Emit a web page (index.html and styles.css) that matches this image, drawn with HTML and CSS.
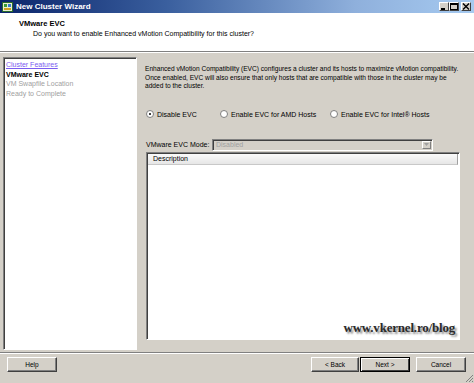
FILE: index.html
```html
<!DOCTYPE html>
<html lang="en">

<head>
    <meta charset="UTF-8">
    <meta name="viewport" content="width=device-width, initial-scale=1.0">
    <title>New Cluster Wizard</title>
    <link rel="stylesheet" href="styles.css">
</head>

<body>
    <div class="window">
        <div class="titlebar">
            <svg class="title-icon" width="11" height="10" viewBox="0 0 11 10">
                <rect x="0.5" y="0.5" width="10" height="9" fill="#e8f0d0" stroke="#2a6a2a"/>
                <rect x="2" y="2" width="3" height="3" fill="#3a9a3a"/>
                <rect x="6" y="2" width="3" height="3" fill="#3a7ad0"/>
                <rect x="2" y="6" width="7" height="2" fill="#d0a020"/>
            </svg>
            <span class="title-text">New Cluster Wizard</span>
            <div class="controls">
                <span class="ctl"><svg width="8" height="7" viewBox="0 0 8 7"><rect x="1" y="5" width="4" height="2" fill="#000"/></svg></span>
                <span class="ctl"><svg width="8" height="7" viewBox="0 0 8 7"><rect x="0.5" y="0.5" width="7" height="6" fill="none" stroke="#000"/><rect x="0" y="0" width="8" height="2" fill="#000"/></svg></span>
                <span class="ctl"><svg width="8" height="7" viewBox="0 0 8 7"><path d="M1 0.5 L7 6.5 M7 0.5 L1 6.5" stroke="#000" stroke-width="1.4"/></svg></span>
            </div>
        </div>

        <div class="header">
            <h1>VMware EVC</h1>
            <p>Do you want to enable Enhanced vMotion Compatibility for this cluster?</p>
        </div>

        <div class="main">
            <ul class="steps">
                <li class="done">Cluster Features</li>
                <li class="current">VMware EVC</li>
                <li class="todo">VM Swapfile Location</li>
                <li class="todo">Ready to Complete</li>
            </ul>

            <div class="content">
                <p class="intro">Enhanced vMotion Compatibility (EVC) configures a cluster and its hosts to maximize vMotion compatibility.
Once enabled, EVC will also ensure that only hosts that are compatible with those in the cluster may be
added to the cluster.</p>

                <div class="radios">
                    <label class="radio r-disable"><span class="dot checked"></span>Disable EVC</label>
                    <label class="radio r-amd"><span class="dot"></span>Enable EVC for AMD Hosts</label>
                    <label class="radio r-intel"><span class="dot"></span>Enable EVC for Intel® Hosts</label>
                </div>

                <div class="mode-row">
                    <span class="mode-label">VMware EVC Mode:</span>
                    <div class="select">
                        <span class="select-value">Disabled</span>
                        <span class="select-arrow">
                            <svg width="5" height="3" viewBox="0 0 5 3"><path d="M0 0 H5 L2.5 3 Z" fill="#a0a0a0"/></svg>
                        </span>
                    </div>
                </div>

                <div class="desc-box">
                    <div class="desc-head">Description</div>
                </div>

                <div class="watermark">www.vkernel.ro/blog</div>
            </div>
        </div>

        <div class="footer">
            <button class="btn">Help</button>
            <div class="nav">
                <button class="btn btn-back">&lt; Back</button>
                <button class="btn btn-next">Next &gt;</button>
                <button class="btn btn-cancel">Cancel</button>
            </div>
            <svg class="grip" width="10" height="10" viewBox="0 0 10 10">
                <path d="M9 2 L2 9 M9 5 L5 9 M9 8 L8 9" stroke="#808080" stroke-width="1"/>
            </svg>
        </div>
    </div>
</body>

</html>
```

FILE: styles.css
```css
body {
    margin: 0;
    font-family: "Liberation Sans", Arial, sans-serif;
    font-size: 7px;
    color: #000;
    background: #d4d0c8;
}

.window {
    width: 474px;
    height: 383px;
    display: flex;
    flex-direction: column;
    background: #d4d0c8;
    box-sizing: border-box;
    position: relative;
}

/* title bar */
.titlebar {
    height: 13px;
    display: flex;
    align-items: center;
    padding: 0 3px 0 2px;
    background: linear-gradient(90deg, #0a246a 0%, #3a5f9e 35%, #8fb0dc 75%, #a6caf0 100%);
    flex-shrink: 0;
}

.title-icon {
    margin-right: 3px;
}

.title-text {
    color: #fff;
    font-weight: bold;
    font-size: 8px;
}

.controls {
    margin-left: auto;
    display: flex;
}

.ctl {
    width: 10px;
    height: 9px;
    display: flex;
    align-items: center;
    justify-content: center;
    background: #d4d0c8;
    border: 1px solid;
    border-color: #fff #404040 #404040 #fff;
    box-sizing: border-box;
}

.ctl:last-child {
    margin-left: 2px;
}

/* header */
.header {
    height: 39px;
    background: #fff;
    padding: 6px 0 0 19px;
    box-sizing: border-box;
    border-bottom: 1px solid #808080;
    box-shadow: 0 1px 0 #fff;
    flex-shrink: 0;
}

.header h1 {
    margin: 0;
    font-size: 7.5px;
    font-weight: bold;
    line-height: 9px;
}

.header p {
    margin: 1px 0 0 14px;
    line-height: 9px;
}

/* main area */
.main {
    flex: 1;
    display: flex;
    padding: 5px 0 0 3px;
    border-bottom: 1px solid #808080;
    box-shadow: 0 1px 0 #fff;
}

.steps {
    list-style: none;
    margin: 0 0 2px 0;
    padding: 2px 0 0 2px;
    width: 134px;
    box-sizing: border-box;
    background: #fff;
    border: 1px solid;
    border-color: #808080 #fff #fff #808080;
    box-shadow: inset 1px 1px 0 #404040;
    flex-shrink: 0;
}

.steps li {
    line-height: 9.5px;
    white-space: nowrap;
}

.steps .done {
    color: #7b5cf0;
    text-decoration: underline;
}

.steps .current {
    font-weight: bold;
}

.steps .todo {
    color: #a0a0a0;
}

.content {
    flex: 1;
    position: relative;
    padding: 8px 14px 0 8px;
    display: flex;
    flex-direction: column;
}

.intro {
    margin: 0;
    font-size: 6.6px;
    line-height: 8.6px;
    white-space: pre;
}

.radios {
    display: flex;
    margin-top: 19px;
    padding-left: 1px;
    height: 9px;
    align-items: center;
}

.radio {
    display: flex;
    align-items: center;
    white-space: nowrap;
}

.r-disable {
    width: 74px;
}

.r-amd {
    width: 110px;
}

.dot {
    width: 6px;
    height: 6px;
    border-radius: 50%;
    background: #fff;
    border: 1px solid #808080;
    margin-right: 3px;
    position: relative;
}

.dot.checked::after {
    content: "";
    position: absolute;
    left: 2px;
    top: 2px;
    width: 2px;
    height: 2px;
    border-radius: 50%;
    background: #000;
}

.mode-row {
    display: flex;
    align-items: center;
    margin-top: 20px;
    padding-left: 1px;
}

.mode-label {
    width: 66px;
}

.select {
    width: 221px;
    height: 12px;
    display: flex;
    align-items: center;
    box-sizing: border-box;
    border: 1px solid;
    border-color: #808080 #fff #fff #808080;
    box-shadow: inset 1px 1px 0 #404040;
    background: #d4d0c8;
}

.select-value {
    color: #a0a0a0;
    padding-left: 3px;
    flex: 1;
}

.select-arrow {
    width: 9px;
    height: 8px;
    margin-right: 1px;
    display: flex;
    align-items: center;
    justify-content: center;
    border: 1px solid;
    border-color: #fff #808080 #808080 #fff;
    box-sizing: border-box;
}

.desc-box {
    margin: 1px 0 0 1px;
    height: 186px;
    background: #fff;
    border: 1px solid #808080;
    border-right-color: #fff;
    border-bottom-color: #fff;
    box-shadow: inset 1px 1px 0 #404040;
}

.desc-head {
    height: 10px;
    line-height: 10px;
    padding-left: 5px;
    margin: 1px 1px 0 1px;
    background: linear-gradient(#fafafa, #e6e6e6);
    border-bottom: 1px solid #c8c8c8;
    border-right: 1px solid #a0a0a0;
}

.watermark {
    position: absolute;
    right: 19px;
    bottom: 16px;
    font-family: "Liberation Serif", "Times New Roman", serif;
    font-size: 13px;
    font-weight: bold;
    color: #2a2a2a;
    text-shadow: 2px 2px 2px #8a8a8a;
    letter-spacing: -0.2px;
}

/* footer */
.footer {
    height: 30px;
    flex-shrink: 0;
    display: flex;
    align-items: flex-start;
    padding: 4px 8px 0 7px;
    box-sizing: border-box;
    position: relative;
}

.nav {
    margin-left: auto;
    display: flex;
}

.btn {
    width: 50px;
    height: 15px;
    padding: 0;
    font-family: "Liberation Sans", Arial, sans-serif;
    font-size: 6.5px;
    color: #000;
    background: #d4d0c8;
    border: 1px solid;
    border-color: #fff #404040 #404040 #fff;
    box-shadow: inset -1px -1px 0 #808080;
}

.btn-back {
    width: 48px;
}

.btn-next {
    border: 1px solid #000;
    box-shadow: inset 1px 1px 0 #fff, inset -1px -1px 0 #404040;
    margin-left: 1px;
}

.btn-cancel {
    margin-left: 6px;
}

.grip {
    position: absolute;
    right: 0;
    bottom: 0;
}
```
